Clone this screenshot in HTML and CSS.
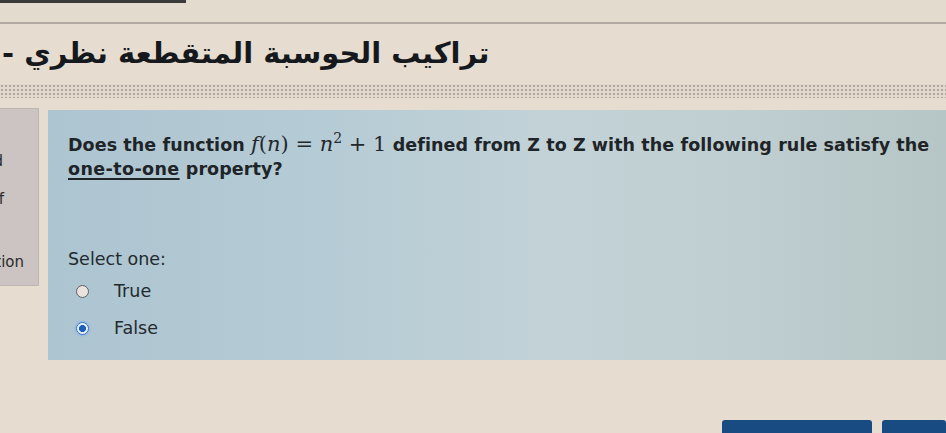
FILE: index.html
```html
<!DOCTYPE html>
<html lang="ar">
<head>
<meta charset="utf-8">
<title>Quiz</title>
<link rel="stylesheet" href="styles.css">
</head>
<body>
<div class="page">
  <div class="topbar"><div class="topbar-dark"></div></div>
  <div class="header">
    <h1 class="title" dir="rtl">تراكيب الحوسبة المتقطعة نظري -</h1>
  </div>
  <div class="dots"></div>
  <div class="content">
    <div class="info">
      <div class="info-line l1">Not yet answered</div>
      <div class="info-line l2">Marked out of</div>
      <div class="info-line l3">Flag question</div>
    </div>
    <div class="question">
      <div class="qtext">Does the function <span class="math"><i>f</i>(<i>n</i>) <span class="op">=</span> <i>n</i><sup>2</sup> <span class="op">+</span> 1</span> defined from Z to Z with the following rule satisfy the <u>one-to-one</u> property?</div>
      <div class="prompt">Select one:</div>
      <div class="answers">
        <label class="answer"><span class="radio"></span><span class="alabel">True</span></label>
        <label class="answer"><span class="radio checked"></span><span class="alabel">False</span></label>
      </div>
    </div>
  </div>
  <div class="footer">
    <div class="btn btn-wide"></div>
    <div class="btn btn-next"></div>
  </div>
</div>
</body>
</html>
```
FILE: styles.css
```css
html, body {
  margin: 0;
  padding: 0;
}
body {
  background: #e6ddd0;
  font-family: "DejaVu Sans", Verdana, sans-serif;
  color: #232a2e;
  width: 946px;
  height: 433px;
  overflow: hidden;
}
.page {
  display: flex;
  flex-direction: column;
}
.topbar {
  height: 22px;
  border-bottom: 2px solid #b3aba2;
  background: #e4dbcf;
}
.topbar-dark {
  width: 186px;
  height: 3px;
  background: #3a3a3a;
}
.header {
  height: 60px;
  display: flex;
  align-items: center;
  padding-left: 2px;
}
.title {
  margin: 0;
  font-family: "DejaVu Sans", sans-serif;
  font-weight: bold;
  font-size: 29px;
  color: #15181c;
  display: inline-block;
  text-align: left;
  line-height: 1;
  padding-bottom: 2px;
}
.dots {
  height: 14px;
  background-color: #e2d8cc;
  background-image: radial-gradient(circle, #a9a29b 0.9px, transparent 1.3px);
  background-size: 4px 4px;
  opacity: 0.9;
}
.content {
  display: flex;
  align-items: flex-start;
  margin-top: 10px;
}
.info {
  width: 39px;
  height: 178px;
  background: #cbc4c3;
  border: 1px solid #bfb6b4;
  border-left: none;
  overflow: hidden;
  font-size: 15px;
  color: #2c2c2c;
  box-sizing: border-box;
  display: flex;
  flex-direction: column;
}
.info-line {
  direction: rtl;
  white-space: nowrap;
  text-align: right;
  overflow: hidden;
}
.l1 { margin-top: 43px; padding-right: 35px; }
.l2 { margin-top: 20px; padding-right: 34px; }
.l3 { margin-top: 45px; padding-right: 14px; }
.question {
  margin-left: 9px;
  margin-top: 2px;
  flex: 1;
  height: 250px;
  background: linear-gradient(90deg, #adc5d1 0%, #b5cbd5 30%, #c2d2d7 55%, #c0cfd1 75%, #b6c5c6 100%);
  box-sizing: border-box;
  padding: 22px 8px 0 20px;
}
.qtext {
  font-weight: bold;
  font-size: 17.5px;
  line-height: 24px;
  letter-spacing: 0.08px;
  color: #1e2428;
}
.qtext u {
  text-decoration-thickness: 2px;
  text-underline-offset: 3px;
  letter-spacing: 0.4px;
}
.math {
  font-family: "DejaVu Serif", "Liberation Serif", serif;
  font-weight: normal;
  font-size: 21px;
  letter-spacing: 0;
  color: #23282b;
}
.math i {
  font-style: italic;
}
.math sup {
  font-size: 14px;
  line-height: 0;
}
.prompt {
  margin-top: 66px;
  font-size: 17.5px;
  line-height: 24px;
}
.answers {
  display: flex;
  flex-direction: column;
  gap: 13px;
  margin-top: 8px;
  padding-left: 8px;
}
.answer {
  display: flex;
  align-items: center;
  font-size: 17.5px;
  line-height: 24px;
}
.radio {
  width: 11px;
  height: 11px;
  border: 1.5px solid #5f5f5f;
  border-radius: 50%;
  background: #e9e2df;
  margin-right: 25px;
  flex: none;
}
.radio.checked {
  border-color: #3a76c6;
  background: radial-gradient(circle, #1d5fb8 0 3.2px, #e8eef7 3.8px);
  box-shadow: 0 0 2px 1px #8fb4e6;
}
.footer {
  display: flex;
  justify-content: flex-end;
  gap: 10px;
  margin-top: 60px;
}
.btn {
  height: 14px;
  background: #184b82;
  border-radius: 3px 3px 0 0;
}
.btn-wide { width: 150px; }
.btn-next { width: 64px; }
```
